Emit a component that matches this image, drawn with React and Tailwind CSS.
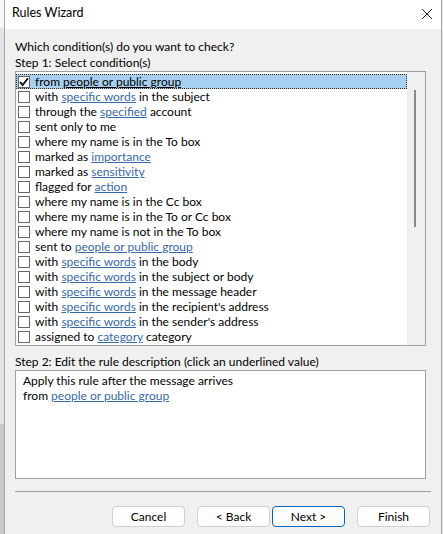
// App.jsx — Outlook "Rules Wizard" dialog, step 1 (conditions)
import { Fragment } from "react";

const FONT = { fontFamily: "Lato, 'Open Sans', sans-serif" };

// each row: plain text pieces and link pieces ({ link: "..." })
const conditions = [
  ["from ", { link: "people or public group" }],
  ["with ", { link: "specific words" }, " in the subject"],
  ["through the ", { link: "specified" }, " account"],
  ["sent only to me"],
  ["where my name is in the To box"],
  ["marked as ", { link: "importance" }],
  ["marked as ", { link: "sensitivity" }],
  ["flagged for ", { link: "action" }],
  ["where my name is in the Cc box"],
  ["where my name is in the To or Cc box"],
  ["where my name is not in the To box"],
  ["sent to ", { link: "people or public group" }],
  ["with ", { link: "specific words" }, " in the body"],
  ["with ", { link: "specific words" }, " in the subject or body"],
  ["with ", { link: "specific words" }, " in the message header"],
  ["with ", { link: "specific words" }, " in the recipient's address"],
  ["with ", { link: "specific words" }, " in the sender's address"],
  ["assigned to ", { link: "category" }, " category"],
];

function Checkbox({ checked }) {
  return (
    <span className="w-[12px] h-[12px] border border-[#666666] bg-white flex items-center justify-center shrink-0">
      {checked && (
        <svg width="10" height="10" viewBox="0 0 10 10">
          <path d="M1 5 L3.6 8 L9 1.2" fill="none" stroke="#000" strokeWidth="1.8" />
        </svg>
      )}
    </span>
  );
}

function ConditionRow({ parts, selected }) {
  return (
    <div
      className={
        "h-[15px] flex items-center pl-[1px] gap-[5px] " +
        (selected ? "bg-[#a6cff0] border border-dotted border-[#3a2a1a]" : "border border-transparent")
      }
    >
      <Checkbox checked={selected} />
      <span className="text-[12px] leading-[15px] whitespace-nowrap text-black">
        {parts.map((p, i) =>
          typeof p === "string" ? (
            <Fragment key={i}>{p}</Fragment>
          ) : (
            <span
              key={i}
              className={selected ? "underline text-black" : "underline text-[#3569a8]"}
            >
              {p.link}
            </span>
          )
        )}
      </span>
    </div>
  );
}

function WizButton({ children, primary }) {
  return (
    <button
      className={
        "w-[73px] h-[21px] rounded-[4px] bg-[#fdfdfd] text-[12px] text-black flex items-center justify-center " +
        (primary ? "border border-[#0067c0]" : "border border-[#d0d0d0]")
      }
    >
      {children}
    </button>
  );
}

export default function App() {
  return (
    <div className="w-[443px] h-[534px] flex overflow-hidden bg-[#e6e6e6]" style={FONT}>
      {/* sliver of the window behind */}
      <div className="w-[4px] shrink-0 flex flex-col">
        <div className="h-[28px] bg-[#f7f7f7]" />
        <div className="flex-1 bg-[#e4e4e4]" />
        <div className="h-[110px] bg-[#c9c9c9]" />
      </div>

      {/* dialog window */}
      <div className="w-[438px] shrink-0 flex flex-col bg-[#f0f0f0] border-l border-r border-[#a8a8a8]">
        {/* title bar */}
        <div className="h-[29px] bg-white flex items-center justify-between pl-[7px] pr-[8px] pb-[2px]">
          <span className="text-[12.5px] text-black">Rules Wizard</span>
          <svg width="12" height="12" viewBox="0 0 12 12">
            <path d="M1 1 L11 11 M11 1 L1 11" stroke="#222" strokeWidth="1" fill="none" />
          </svg>
        </div>

        <div className="flex flex-col pl-[10px] pt-[10px]">
          <div className="text-[12px] leading-[16px] text-black">Which condition(s) do you want to check?</div>
          <div className="text-[12px] leading-[16px] text-black">Step 1: Select condition(s)</div>

          {/* conditions list */}
          <div className="w-[411px] h-[275px] bg-white border border-[#a0a0a0] flex">
            <div className="flex-1 flex flex-col pt-[2px] overflow-hidden">
              {conditions.map((parts, i) => (
                <ConditionRow key={i} parts={parts} selected={i === 0} />
              ))}
            </div>
            <div className="w-[18px] bg-[#f0f0f0] pt-[18px] pl-[7px]">
              <div className="w-[2px] h-[137px] bg-[#8a8a8a]" />
            </div>
          </div>

          <div className="mt-[8px] text-[12px] leading-[16px] text-black">
            Step 2: Edit the rule description (click an underlined value)
          </div>

          {/* rule description */}
          <div className="w-[411px] h-[109px] bg-white border border-[#a0a0a0] pt-[2px] pl-[7px]">
            <div className="text-[12px] leading-[15px] text-black">Apply this rule after the message arrives</div>
            <div className="text-[12px] leading-[15px] text-black">
              from <span className="underline text-[#3569a8]">people or public group</span>
            </div>
          </div>

          <div className="mt-[12px] mr-[10px] h-[1px] bg-[#a0a0a0]" />
        </div>

        {/* buttons */}
        <div className="mt-[14px] flex justify-end pr-[11px]">
          <WizButton>Cancel</WizButton>
          <div className="ml-[12px]">
            <WizButton>&lt; Back</WizButton>
          </div>
          <div className="ml-[2px]">
            <WizButton primary>Next &gt;</WizButton>
          </div>
          <div className="ml-[12px]">
            <WizButton>Finish</WizButton>
          </div>
        </div>
      </div>
    </div>
  );
}
